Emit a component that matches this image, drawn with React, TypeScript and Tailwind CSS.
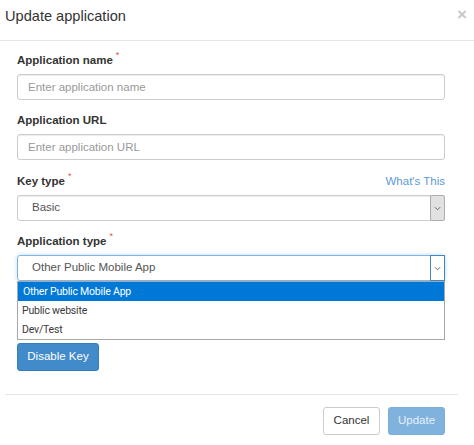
const font = { fontFamily: '"Liberation Sans", Arial, sans-serif' }

function Label({ text, required }: { text: string; required?: boolean }) {
  return (
    <div className="flex items-start text-[11.5px] font-bold leading-[15px] text-[#333]">
      {text}
      {required && <span className="ml-[3px] mt-[-3px] text-[9px] font-normal leading-[10px] text-[#d9534f]">*</span>}
    </div>
  )
}

function Chevron() {
  return (
    <svg viewBox="0 0 8 5" width="7" height="5" fill="none">
      <path d="M1 1l3 3 3-3" stroke="#555" strokeWidth="1" />
    </svg>
  )
}

const inputCls =
  'h-[26px] rounded-[3px] border border-[#ccc] px-[10px] text-[11.5px] text-[#555] shadow-[inset_0_1px_1px_rgba(0,0,0,0.075)] outline-none placeholder:text-[#999]'

export default function App() {
  return (
    <div className="w-[474px] h-[445px] bg-white text-[#333]" style={font}>
      <header className="flex h-[41px] items-start justify-between border-b border-[#e5e5e5] pl-[5px] pr-[7px] pt-[6px]">
        <h1 className="text-[14.6px] leading-[20px] text-[#333]">Update application</h1>
        <span className="mt-[-1px] text-[17px] font-bold leading-[20px] text-[#c8c8c8]">×</span>
      </header>

      <div className="flex flex-col pl-[17px] pr-[29px] pt-[12px]">
        <Label text="Application name" required />
        <input placeholder="Enter application name" className={`mt-[6px] ${inputCls}`} />

        <div className="mt-[13px]">
          <Label text="Application URL" />
        </div>
        <input placeholder="Enter application URL" className={`mt-[6px] ${inputCls}`} />

        <div className="mt-[14px] flex items-start justify-between">
          <Label text="Key type" required />
          <a className="text-[11.5px] leading-[15px] text-[#5b9bd5]">What's This</a>
        </div>
        <div className="mt-[6px] flex h-[26px] items-stretch rounded-[3px] border border-[#ccc] shadow-[inset_0_1px_1px_rgba(0,0,0,0.075)]">
          <span className="flex flex-1 items-center pl-[14px] text-[11.5px] text-[#555]">Basic</span>
          <span className="my-[-1px] mr-[-1px] flex w-[15px] items-center justify-center rounded-[2px] border border-[#adadad] bg-[#e1e1e1]">
            <Chevron />
          </span>
        </div>

        <div className="mt-[13px]">
          <Label text="Application type" required />
        </div>
        <div className="relative mt-[6px]">
          <div className="flex h-[26px] items-stretch rounded-[3px] border border-[#7fb5e6] shadow-[0_0_4px_rgba(102,175,233,0.45)]">
            <span className="flex flex-1 items-center pl-[14px] text-[11.5px] text-[#555]">Other Public Mobile App</span>
            <span className="my-[-1px] mr-[-1px] flex w-[15px] items-center justify-center border border-[#3f86c8] bg-white">
              <Chevron />
            </span>
          </div>
          <ul
            className="absolute left-0 right-0 top-[26px] z-10 border border-[#a8a8a8] bg-white text-[10.5px] leading-[19px] tracking-[-0.2px] text-[#3a3a3a]"
            style={{ fontFamily: 'Roboto, "Noto Sans", sans-serif' }}
          >
            <li className="bg-[#0078d7] pl-[5px] text-white">Other Public Mobile App</li>
            <li className="pl-[4px]">Public website</li>
            <li className="pl-[4px]">Dev/Test</li>
          </ul>
        </div>

        <div className="mt-[62px]">
          <button className="h-[28px] w-[82px] rounded-[3px] border border-[#357ebd] bg-[#428bca] text-[11.5px] text-white">
            Disable Key
          </button>
        </div>
      </div>

      <footer className="ml-[5px] mr-[16px] mt-[23px] flex justify-end gap-[8px] border-t border-[#e5e5e5] pr-[13px] pt-[12px]">
        <button className="h-[28px] w-[57px] rounded-[3px] border border-[#ccc] bg-white text-[11.5px] text-[#333]">
          Cancel
        </button>
        <button className="h-[28px] w-[57px] rounded-[3px] border border-[#7aaedb] bg-[#80b2de] text-[11.5px] text-[#e6f0fa]">
          Update
        </button>
      </footer>
    </div>
  )
}
